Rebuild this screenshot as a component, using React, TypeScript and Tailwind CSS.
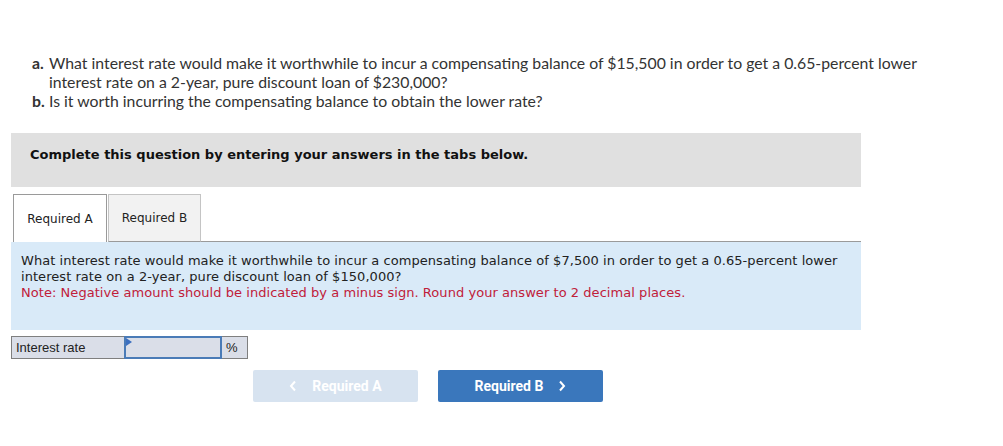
import React from "react";

export default function App() {
  const q = "font-['Lato','Open_Sans',sans-serif]";
  const v = "font-['Verdana','DejaVu_Sans',sans-serif]";
  return (
    <div className="w-[1003px] h-[446px] bg-white relative overflow-hidden">
      <div className={`${q} text-[15.8px] leading-[19px] text-[#333] pt-[53px] pl-[32px]`}>
        <div className="flex">
          <span className="font-bold w-[17px] shrink-0">a.</span>
          <span>
            What interest rate would make it worthwhile to incur a compensating balance of $15,500 in order to get a 0.65-percent lower
            <br />
            interest rate on a 2-year, pure discount loan of $230,000?
          </span>
        </div>
        <div className="flex">
          <span className="font-bold w-[17px] shrink-0">b.</span>
          <span>Is it worth incurring the compensating balance to obtain the lower rate?</span>
        </div>
      </div>

      <div className={`${v} ml-[11px] mt-[23px] w-[850px] h-[54px] bg-[#e0e0e0] pt-[14px] pl-[19px] text-[13px] leading-[16px] font-bold text-[#111]`}>
        Complete this question by entering your answers in the tabs below.
      </div>

      <div className={`${v} ml-[11px] mt-[7px] w-[850px]`}>
        <div className="flex items-end h-[48px] pl-[2px]">
          <div className="w-[94px] h-[48px] bg-white border border-[#9a9a9a] border-b-0 flex items-center justify-center text-[12px] text-[#222]">
            Required A
          </div>
          <div className="ml-[1px] w-[93px] h-[48px] bg-[#f2f2f2] border border-[#c4c4c4] border-b-[#9a9a9a] flex items-center justify-center text-[12px] text-[#222]">
            Required B
          </div>
          <div className="flex-1 border-b border-[#9a9a9a]" />
        </div>
        <div className="bg-[#d9eaf8] h-[88px] pl-[10px] pt-[11px] text-[13px] leading-[16px] text-[#222] tracking-[0.05px]">
          What interest rate would make it worthwhile to incur a compensating balance of $7,500 in order to get a 0.65-percent lower
          <br />
          interest rate on a 2-year, pure discount loan of $150,000?
          <br />
          <span className="text-[#c0203a]">Note: Negative amount should be indicated by a minus sign. Round your answer to 2 decimal places.</span>
        </div>
      </div>

      <div className="ml-[11px] mt-[6px] flex h-[23px] font-['Liberation_Sans','Arial',sans-serif] text-[13px] text-[#222]">
        <div className="w-[114px] bg-[#dadee8] border border-[#7f7f7f] flex items-center pl-[4px]">Interest rate</div>
        <div className="relative w-[98px] bg-[#dadee8] border-2 border-[#4a7bb7] -ml-[1px]">
          <div className="absolute left-0 top-0 w-0 h-0 border-t-[4px] border-b-[4px] border-l-[6px] border-t-transparent border-b-transparent border-l-[#3b6fc0]" />
        </div>
        <div className="w-[27px] bg-[#dadee8] border border-[#7f7f7f] -ml-[1px] flex items-center pl-[4px]">%</div>
      </div>

      <div className="mt-[11px] ml-[253px] flex gap-[20px] font-['Roboto',sans-serif] font-bold text-[14px]">
        <div className="w-[165px] h-[32px] rounded-[2px] bg-[#d7e3f0] text-white flex items-center justify-center gap-[15px]">
          <svg width="8" height="12" viewBox="0 0 8 12"><path d="M6 1.5L2 6l4 4.5" stroke="white" strokeWidth="2" fill="none" /></svg>
          <span>Required A</span>
        </div>
        <div className="w-[165px] h-[32px] rounded-[2px] bg-[#3a77bc] text-white flex items-center justify-center gap-[15px]">
          <span>Required B</span>
          <svg width="8" height="12" viewBox="0 0 8 12"><path d="M2 1.5L6 6l-4 4.5" stroke="white" strokeWidth="2" fill="none" /></svg>
        </div>
      </div>
    </div>
  );
}
